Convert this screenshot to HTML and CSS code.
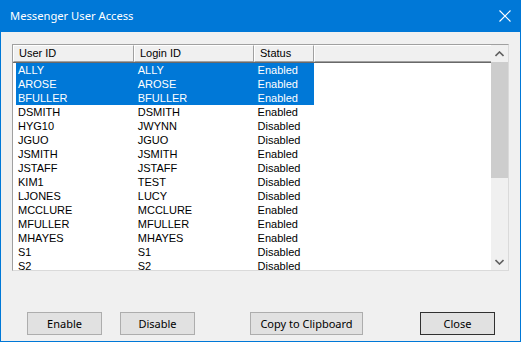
FILE: index.html
```html
<!DOCTYPE html>
<html lang="en">
<head>
  <meta charset="UTF-8">
  <title>Messenger User Access</title>
  <link rel="stylesheet" href="styles.css">
</head>
<body>
  <div class="window">
    <div class="titlebar">
      <span class="title">Messenger User Access</span>
      <svg class="close-x" width="12" height="12" viewBox="0 0 12 12">
        <path d="M0.5 0.5 L11.5 11.5 M11.5 0.5 L0.5 11.5" stroke="#fff" stroke-width="1.1"/>
      </svg>
    </div>

    <div class="content">
      <div class="listbox">
        <div class="table">
          <div class="header">
            <div class="hcell col-user">User ID</div>
            <div class="hcell col-login">Login ID</div>
            <div class="hcell col-status">Status</div>
            <div class="hcell col-rest"></div>
          </div>
          <div class="rows" id="rows"></div>
        </div>
        <div class="scrollbar">
          <div class="sb-btn">
            <svg width="9" height="6" viewBox="0 0 9 6"><path d="M0.5 5 L4.5 1 L8.5 5" fill="none" stroke="#606060" stroke-width="1.6"/></svg>
          </div>
          <div class="sb-track">
            <div class="sb-thumb"></div>
          </div>
          <div class="sb-btn">
            <svg width="9" height="6" viewBox="0 0 9 6"><path d="M0.5 1 L4.5 5 L8.5 1" fill="none" stroke="#606060" stroke-width="1.6"/></svg>
          </div>
        </div>
      </div>

      <div class="buttons">
        <button class="btn btn-enable">Enable</button>
        <button class="btn btn-disable">Disable</button>
        <button class="btn btn-copy">Copy to Clipboard</button>
        <button class="btn btn-close default">Close</button>
      </div>
    </div>
  </div>

  <script>
    const users = [
      ["ALLY", "ALLY", "Enabled", true],
      ["AROSE", "AROSE", "Enabled", true],
      ["BFULLER", "BFULLER", "Enabled", true],
      ["DSMITH", "DSMITH", "Enabled"],
      ["HYG10", "JWYNN", "Disabled"],
      ["JGUO", "JGUO", "Disabled"],
      ["JSMITH", "JSMITH", "Enabled"],
      ["JSTAFF", "JSTAFF", "Disabled"],
      ["KIM1", "TEST", "Disabled"],
      ["LJONES", "LUCY", "Disabled"],
      ["MCCLURE", "MCCLURE", "Enabled"],
      ["MFULLER", "MFULLER", "Enabled"],
      ["MHAYES", "MHAYES", "Enabled"],
      ["S1", "S1", "Disabled"],
      ["S2", "S2", "Disabled"]
    ];

    document.getElementById("rows").innerHTML = users.map(u =>
      `<div class="row${u[3] ? " selected" : ""}">
        <span class="cell c-user">${u[0]}</span>
        <span class="cell c-login">${u[1]}</span>
        <span class="cell c-status">${u[2]}</span>
      </div>`).join("");
  </script>
</body>
</html>
```

FILE: styles.css
```css
body {
  margin: 0;
  background: #f0f0f0;
  font-family: "Liberation Sans", Arial, sans-serif;
}
.window {
  width: 519px;
  height: 341px;
  border: 1px solid #0078d7;
  border-top: none;
  background: #f0f0f0;
  display: flex;
  flex-direction: column;
}
.titlebar {
  height: 31px;
  margin: 0 -1px;
  background: #0078d7;
  color: #fff;
  display: flex;
  align-items: center;
  justify-content: space-between;
  font-family: "Noto Sans", sans-serif;
  font-size: 11.2px;
  padding: 0 10px 1px 10px;
}
.content {
  padding: 12px 0 0 11px;
}
.listbox {
  width: 495px;
  height: 225px;
  border: 1px solid #a0a0a0;
  border-right-color: #dadada;
  border-bottom-color: #dadada;
  background: #fff;
  display: flex;
  overflow: hidden;
}
.table {
  flex: 1;
  overflow: hidden;
}
.header {
  display: flex;
  height: 17px;
  background: #f0f0f0;
  border-bottom: 1px solid #696969;
}
.hcell {
  box-sizing: border-box;
  height: 17px;
  font-size: 11px;
  line-height: 15px;
  border-top: 1px solid #fff;
  border-left: 1px solid #fff;
  border-right: 1px solid #a0a0a0;
  border-bottom: 1px solid #a0a0a0;
  padding-left: 5px;
  color: #000;
}
.col-user { width: 121px; }
.col-login { width: 120px; }
.col-status { width: 60px; }
.col-rest { flex: 1; border-right: none; }
.rows {
  padding: 0 0 0 3px;
}
.row {
  display: flex;
  width: 298px;
  height: 14px;
  font-size: 11px;
  line-height: 14px;
  color: #000;
}
.row.selected {
  background: #0078d7;
  color: #fff;
}
.cell {
  padding-left: 2px;
  white-space: nowrap;
}
.c-user { width: 119px; }
.c-login { width: 118px; }
.c-status { width: 57px; padding-left: 3px; }
.scrollbar {
  width: 17px;
  background: #f0f0f0;
  display: flex;
  flex-direction: column;
}
.sb-btn {
  height: 17px;
  display: flex;
  align-items: center;
  justify-content: center;
}
.sb-track {
  flex: 1;
}
.sb-thumb {
  height: 116px;
  background: #cdcdcd;
}
.buttons {
  display: flex;
  margin-top: 41px;
  padding-left: 15px;
}
.btn {
  box-sizing: border-box;
  height: 23px;
  width: 75px;
  background: #e1e1e1;
  border: 1px solid #adadad;
  font-family: "Noto Sans", sans-serif;
  font-size: 11px;
  color: #000;
  padding: 0 0 1px 0;
}
.btn-disable { margin-left: 18px; }
.btn-copy { margin-left: 55px; width: 113px; }
.btn-close { margin-left: 57px; }
.btn.default {
  border: 1px solid #303030;
  box-shadow: inset 0 0 0 1px #e1e1e1;
}
```
